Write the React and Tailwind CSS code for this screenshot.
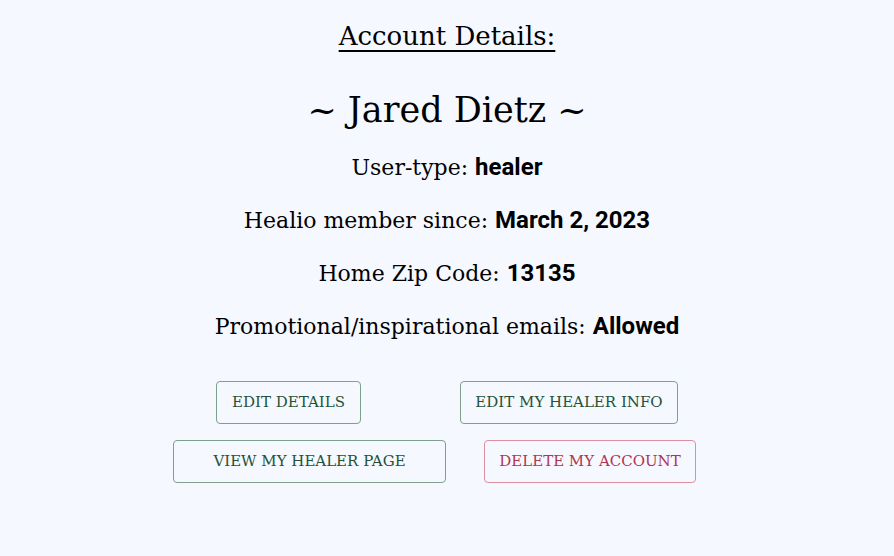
export default function App() {
  const serif = { fontFamily: '"DejaVu Serif", "Liberation Serif", serif' };
  return (
    <div className="min-h-[556px] w-full bg-[#f5f8ff] text-black" style={serif}>
      <div className="flex flex-col items-center pt-[16px]">
        <h2 className="text-[26px] leading-[40px] underline underline-offset-[5px] decoration-[2px]">Account Details:</h2>
        <h1 className="mt-[30px] text-[35px] leading-[48px]">~ Jared Dietz ~</h1>
        <div className="mt-[17px] flex flex-col items-center gap-[20px] text-[22px] leading-[32px]">
          <p>User-type: <span className="font-bold font-['Roboto',sans-serif] text-[24px]">healer</span></p>
          <p>Healio member since: <span className="font-bold font-['Roboto',sans-serif] text-[24px]">March 2, 2023</span></p>
          <p>Home Zip Code: <span className="font-bold font-['Roboto',sans-serif] text-[24px]">13135</span></p>
          <p>Promotional/inspirational emails: <span className="font-bold font-['Roboto',sans-serif] text-[24px]">Allowed</span></p>
        </div>
        <div className="mt-[38px] flex justify-center gap-[99px]">
          <button className="h-[43px] w-[145px] rounded-[4px] border border-[#7fa08a] text-[15px] text-[#245236]">EDIT DETAILS</button>
          <button className="h-[43px] w-[218px] rounded-[4px] border border-[#7fa08a] text-[15px] text-[#245236]">EDIT MY HEALER INFO</button>
        </div>
        <div className="mt-[16px] flex justify-center gap-[38px] pr-[25px]">
          <button className="h-[43px] w-[273px] rounded-[4px] border border-[#7fa08a] text-[15px] text-[#245236]">VIEW MY HEALER PAGE</button>
          <button className="h-[43px] w-[212px] rounded-[4px] border border-[#dd8fa0] text-[15px] text-[#b3344f]">DELETE MY ACCOUNT</button>
        </div>
      </div>
    </div>
  );
}
